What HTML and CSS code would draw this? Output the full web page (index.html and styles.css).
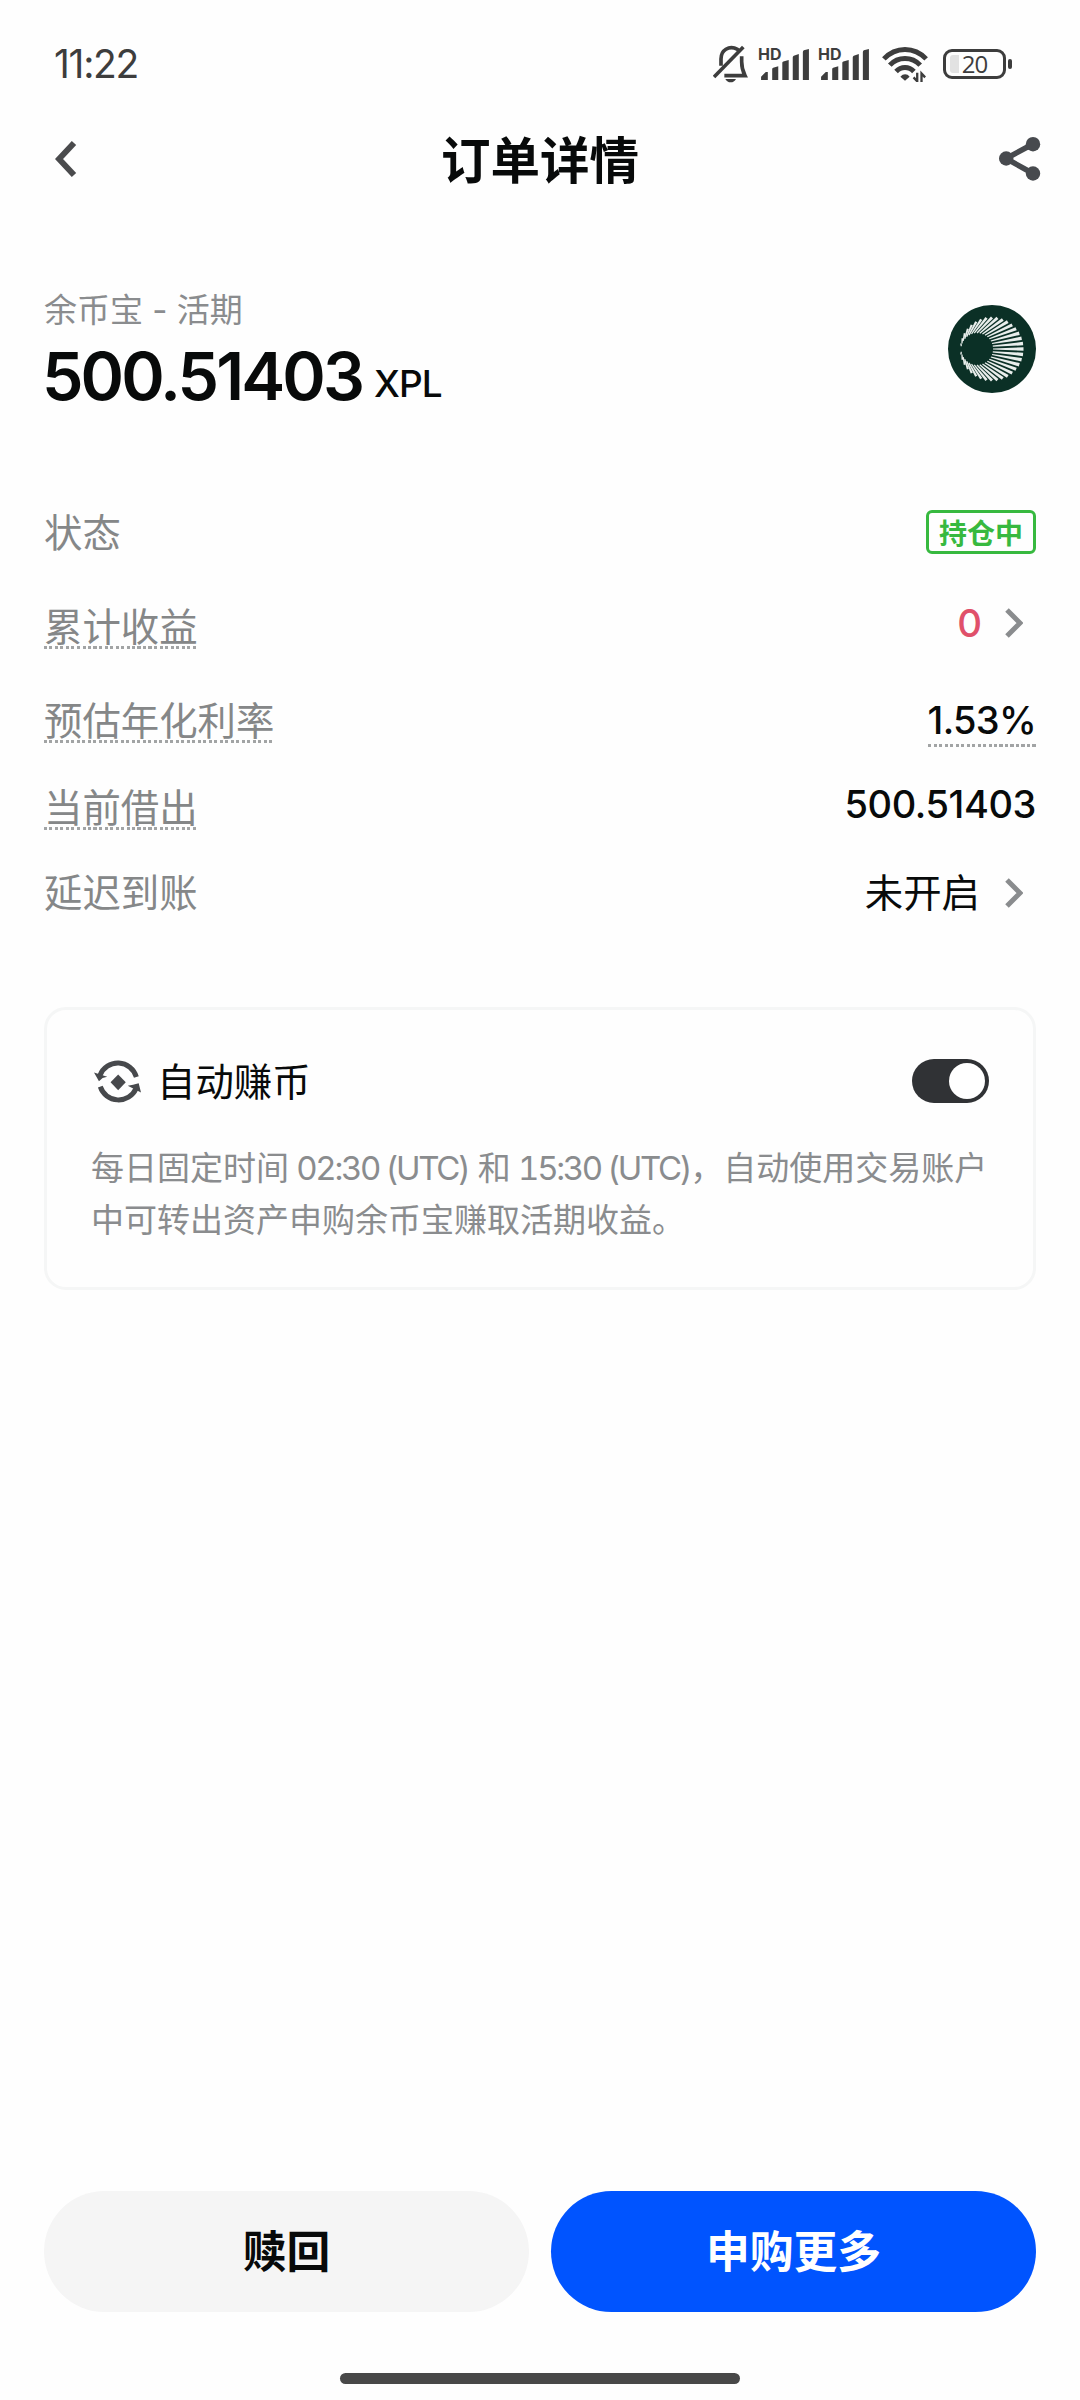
FILE: index.html
```html
<!DOCTYPE html>
<html lang="zh-CN">
<head>
  <meta charset="UTF-8" />
  <meta name="viewport" content="width=device-width, initial-scale=1.0"/>
  <title>订单详情</title>
  <link rel="stylesheet" href="styles.css">
</head>
<body>
  <div class="screen">
    <div class="status-bar">
      <span class="clock">11:22</span>
      <div class="status-icons">
        <svg class="icon-mute" viewBox="0 0 105 114">
          <g fill="none" stroke="#3d3d3d" stroke-width="11">
            <path d="M24 62V42C24 12 50 5 64 9C70 11 75 13 78 17"/>
            <path d="M86 34V50C86 70 90 80 96 92H34"/>
            <path d="M3 96L91 6"/>
          </g>
          <path d="M37 102H69C65 109 60 112 53 112S41 109 37 102Z" fill="#3d3d3d"/>
        </svg>
        <div class="signal">
          <span class="hd">HD</span>
          <svg class="bars" viewBox="0 0 142 92" fill="#3d3d3d">
            <path d="M0 92V82L14 68H20V92ZM33 92V59Q33 57 36 56L51 51V92ZM63 92V41Q63 38 66 37L82 33V92ZM94 92V25Q94 22 97 20L112 15V92ZM124 92V10Q124 6 127 4L142 0V92Z"/>
          </svg>
        </div>
        <div class="signal">
          <span class="hd">HD</span>
          <svg class="bars" viewBox="0 0 142 92" fill="#3d3d3d">
            <path d="M0 92V82L14 68H20V92ZM33 92V59Q33 57 36 56L51 51V92ZM63 92V41Q63 38 66 37L82 33V92ZM94 92V25Q94 22 97 20L112 15V92ZM124 92V10Q124 6 127 4L142 0V92Z"/>
          </svg>
        </div>
        <svg class="icon-wifi" viewBox="0 0 138 106">
          <g fill="none" stroke="#3d3d3d" stroke-width="15">
            <path d="M5 36C41 -2 97 -2 133 36"/>
            <path d="M23 55C48 28 90 28 115 55"/>
            <path d="M42 74C57 58 81 58 96 74"/>
          </g>
          <path d="M55 90C63 80 76 80 83 90L69 102Z" fill="#3d3d3d"/>
          <path d="M106 78V104L95 92M119 106V80L130 92" fill="none" stroke="#3d3d3d" stroke-width="7"/>
        </svg>
        <div class="battery"><span class="level"></span>20</div>
        <span class="battery-tip"></span>
      </div>
    </div>

    <header class="navbar">
      <svg class="icon-back" viewBox="0 0 22 38">
        <path d="M19 3L4 19L19 35" fill="none" stroke="#4a4b4d" stroke-width="6"/>
      </svg>
      <h1>订单详情</h1>
      <svg class="icon-share" viewBox="0 0 42 44">
        <path d="M34 7L7 21.500L34 36.500" fill="none" stroke="#474a4e" stroke-width="5.500"/>
        <circle cx="7.200" cy="21.500" r="7.200" fill="#474a4e"/>
        <circle cx="34" cy="7.200" r="7.200" fill="#474a4e"/>
        <circle cx="34" cy="36.500" r="7.200" fill="#474a4e"/>
      </svg>
    </header>

    <section class="summary">
      <div class="holding">
        <div class="product">余币宝 - 活期</div>
        <div class="amount">500.51403<span class="unit">XPL</span></div>
      </div>
      <svg class="coin" viewBox="-44 -44 88 88">
        <circle r="44" fill="#0b3026"/>
        <g id="rays" fill="#e9eeec"></g>
      </svg>
    </section>

    <section class="details">
      <div class="row">
        <span class="label">状态</span>
        <span class="badge">持仓中</span>
      </div>
      <div class="row">
        <span class="label dotted">累计收益</span>
        <span class="value link raised"><span class="profit">0</span>
          <svg class="chevron" viewBox="0 0 18 30"><path d="M2 2L15 15L2 28" fill="none" stroke="#8a8c8e" stroke-width="5"/></svg>
        </span>
      </div>
      <div class="row apr">
        <span class="label dotted">预估年化利率</span>
        <span class="value rate dotted">1.53%</span>
      </div>
      <div class="row short">
        <span class="label dotted">当前借出</span>
        <span class="value raised">500.51403</span>
      </div>
      <div class="row short">
        <span class="label">延迟到账</span>
        <span class="value link">未开启
          <svg class="chevron" viewBox="0 0 18 30"><path d="M2 2L15 15L2 28" fill="none" stroke="#8a8c8e" stroke-width="5"/></svg>
        </span>
      </div>
    </section>

    <section class="card">
      <div class="card-head">
        <svg class="icon-earn" viewBox="0 0 142 132">
          <g fill="none" stroke="#47494c" stroke-width="15">
            <path d="M18 46A58 58 0 0 1 128 51"/>
            <path d="M19 80A58 58 0 0 0 127 86"/>
          </g>
          <path d="M0 37L40 50L26 54L15 64ZM142 98L102 77L118 74L135 70Z" fill="#47494c"/>
          <path d="M73 43L96 67L73 91L50 67Z" fill="#47494c"/>
        </svg>
        <span class="card-title">自动赚币</span>
        <span class="toggle" id="autoEarn"></span>
      </div>
      <p class="note">每日固定时间 <span class="latin">02:30 (UTC)</span> 和 <span class="latin">15:30 (UTC)</span>，自动使用交易账户<br>中可转出资产申购余币宝赚取活期收益。</p>
    </section>

    <div class="actions">
      <button class="btn">赎回</button>
      <button class="btn primary">申购更多</button>
    </div>
    <div class="home-bar"></div>
  </div>

  <script>
    // coin logo: rays run from a small offset circle to a larger one
    const rays = document.getElementById("rays");
    for (let i = 0; i < 36; i++) {
      const a = i * Math.PI / 18;
      const x1 = -15 + 16 * Math.cos(a), y1 = 16 * Math.sin(a);
      const x2 = 31.5 * Math.cos(a), y2 = 31.5 * Math.sin(a);
      const len = Math.hypot(x2 - x1, y2 - y1);
      if (len < 2) continue;
      const nx = -(y2 - y1) / len, ny = (x2 - x1) / len;
      const w = 0.7 + len / 29;
      const ray = document.createElementNS("http://www.w3.org/2000/svg", "polygon");
      ray.setAttribute("points", [
        [x1 + nx * 0.6, y1 + ny * 0.6], [x2 + nx * w, y2 + ny * w],
        [x2 - nx * w, y2 - ny * w], [x1 - nx * 0.6, y1 - ny * 0.6]
      ].join(" "));
      rays.appendChild(ray);
    }
  </script>
</body>
</html>
```
FILE: styles.css
```css
* {
  box-sizing: border-box;
}
body {
  margin: 0;
  background: #fefefe;
  color: #080a0a;
  font-family: Inter, "Noto Sans CJK SC", sans-serif;
}
.screen {
  display: flex;
  flex-direction: column;
  width: 1080px;
  height: 2400px;
  padding: 24px 44px 16px;
}
svg {
  display: block;
  flex: none;
}
.status-bar {
  display: flex;
  align-items: center;
  justify-content: space-between;
  height: 80px;
  padding: 0 24px 0 10px;
}
.clock {
  padding-bottom: 2px;
  font-size: 39px;
  letter-spacing: -1.300px;
  color: #3d3d3d;
}
.status-icons {
  display: flex;
  align-items: center;
}
.icon-mute {
  width: 35px;
  height: 38px;
  margin-right: 13px;
}
.signal {
  position: relative;
  width: 48px;
  height: 31px;
  margin-right: 12px;
}
.hd {
  position: absolute;
  left: -3px;
  top: -4px;
  font-size: 16px;
  font-weight: 700;
  line-height: 18px;
  color: #3d3d3d;
}
.bars {
  width: 48px;
  height: 31px;
}
.icon-wifi {
  width: 46px;
  height: 35px;
  margin: 0 15px 0 1px;
}
.battery {
  position: relative;
  width: 63px;
  height: 30px;
  border: 3px solid #3d3d3d;
  border-radius: 9px;
  font: 24px/23px "Open Sans", sans-serif;
  letter-spacing: -1px;
  text-align: center;
  color: #3d3d3d;
}
.level {
  position: absolute;
  left: 4px;
  top: 3px;
  width: 9px;
  height: 18px;
  border-radius: 3px 0 0 3px;
  background: #e2e2e2;
}
.battery-tip {
  width: 4px;
  height: 10px;
  margin-left: 2px;
  border-radius: 2px;
  background: #3d3d3d;
}
.navbar {
  display: flex;
  align-items: center;
  justify-content: space-between;
  height: 110px;
  margin: 0 -5px 0 11px;
}
.icon-back {
  width: 22px;
  height: 38px;
}
.navbar h1 {
  margin: 0;
  padding: 4px 0 0 4px;
  font-size: 49.500px;
  font-weight: 700;
  line-height: 60px;
}
.icon-share {
  width: 42px;
  height: 44px;
}
.summary {
  display: flex;
  align-items: center;
  justify-content: space-between;
  height: 124px;
  margin-top: 73px;
}
.holding {
  padding-top: 12px;
}
.product {
  height: 50px;
  font-size: 33px;
  line-height: 44px;
  color: #8a8c8e;
}
.amount {
  margin-left: -2px;
  font-size: 66px;
  font-weight: 600;
  line-height: 76px;
  letter-spacing: -2.900px;
}
.unit {
  margin-left: 12px;
  font-size: 37px;
  font-weight: 500;
  letter-spacing: -1px;
  vertical-align: 3px;
}
.coin {
  width: 88px;
  height: 88px;
}
.details {
  margin-top: 74px;
}
.row {
  display: flex;
  align-items: center;
  justify-content: space-between;
  height: 92px;
}
.row:first-child {
  height: 95px;
}
.row.short {
  height: 86px;
}
.label {
  font-size: 38.400px;
  line-height: 44px;
  color: #858788;
}
.dotted {
  margin-top: 2px;
  background: repeating-linear-gradient(90deg, #a2a4a5 0 3px, transparent 3px 5.500px) left bottom / 100% 3px no-repeat;
}
.apr .label {
  margin-top: 5px;
}
.badge {
  width: 110px;
  height: 44px;
  margin-bottom: 1px;
  border: 3px solid #37b93f;
  border-radius: 6px;
  font-size: 28px;
  font-weight: 700;
  line-height: 42px;
  text-align: center;
  color: #37b93f;
}
.value {
  font-size: 38px;
  font-weight: 500;
  line-height: 44px;
  letter-spacing: -0.400px;
}
.value.raised {
  margin-bottom: 6px;
}
.value.link {
  display: flex;
  align-items: center;
  gap: 25px;
  padding-right: 13px;
  font-size: 38.400px;
  font-weight: 400;
  letter-spacing: 0;
}
.profit {
  margin-right: -2px;
  font-weight: 500;
  color: #e0506a;
}
.chevron {
  width: 18px;
  height: 30px;
}
.value.rate {
  margin-top: 8px;
  padding-bottom: 5px;
  letter-spacing: -0.700px;
}
.card {
  height: 283px;
  margin-top: 71px;
  padding: 46px 44px 0;
  border: 3px solid #f5f6f6;
  border-radius: 22px;
}
.card-head {
  display: flex;
  align-items: center;
  height: 50px;
}
.icon-earn {
  width: 47px;
  height: 44px;
  margin: 2px 16px 0 3px;
}
.card-title {
  padding-top: 1px;
  font-size: 38.400px;
  line-height: 50px;
}
.toggle {
  width: 77px;
  height: 44px;
  margin-left: auto;
  padding: 4px;
  border-radius: 22px;
  background: #303235;
}
.toggle::after {
  content: "";
  display: block;
  width: 36px;
  height: 36px;
  margin-left: auto;
  border-radius: 50%;
  background: #fff;
}
.note {
  margin: 36px 0 0;
  font-size: 33px;
  line-height: 52px;
  white-space: nowrap;
  color: #8a8c8e;
}
.latin {
  margin-left: -2px;
  font-variant-numeric: tabular-nums;
  letter-spacing: -2.350px;
}
.actions {
  display: flex;
  gap: 22px;
  margin-top: auto;
}
.btn {
  flex: 1;
  height: 121px;
  padding: 3px 0 0;
  border: none;
  border-radius: 61px;
  background: #f5f5f5;
  color: #080a0a;
  font: 700 43.800px/60px Inter, "Noto Sans CJK SC", sans-serif;
}
.btn.primary {
  background: #0054ff;
  color: #fff;
}
.home-bar {
  width: 400px;
  height: 11px;
  margin: 61px auto 0;
  border-radius: 6px;
  background: #484848;
}
```
